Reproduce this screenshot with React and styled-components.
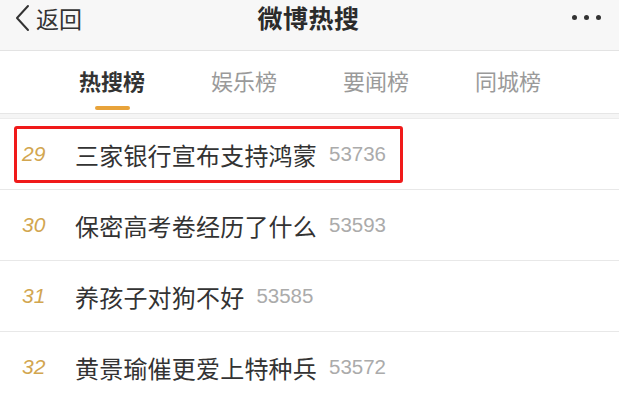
import styled, { createGlobalStyle } from "styled-components";

const GlobalStyle = createGlobalStyle`
  html, body {
    margin: 0;
    padding: 0;
    background: #ffffff;
  }
  body {
    font-family: "Noto Sans CJK SC", "Noto Sans", sans-serif;
    color: #333333;
  }
`;

const Page = styled.div`
  width: 619px;
  height: 398px;
  overflow: hidden;
  background: #ffffff;
`;

const Header = styled.header`
  display: grid;
  grid-template-columns: 1fr auto 1fr;
  align-items: center;
  height: 50px;
  padding: 0 16px 0 14px;
  background: #f7f7f7;
  border-bottom: 1px solid #e3e3e3;
`;

const Back = styled.div`
  display: flex;
  align-items: center;
  gap: 6px;
  font-size: 23px;
  color: #333333;
  margin-top: -14px;
`;

const Title = styled.h1`
  margin: -16px 0 0;
  font-size: 25px;
  font-weight: 700;
  letter-spacing: 0.5px;
  color: #2b2b2b;
`;

const More = styled.div`
  justify-self: end;
  display: flex;
  gap: 7px;
  margin-top: -16px;
  margin-right: 2px;
`;

const Dot = styled.span`
  width: 5px;
  height: 5px;
  border-radius: 50%;
  background: #333333;
`;

const Tabs = styled.nav`
  display: grid;
  grid-template-columns: repeat(4, 132px);
  height: 62px;
  padding-left: 46px;
  background: #ffffff;
  border-bottom: 1px solid #e6e6e6;
`;

const Tab = styled.div`
  display: flex;
  flex-direction: column;
  align-items: center;
  padding-top: 14px;
  font-size: 22px;
  line-height: 30px;
  font-weight: ${(p) => (p.$active ? 700 : 400)};
  color: ${(p) => (p.$active ? "#333333" : "#9a9a9a")};
`;

const Underline = styled.span`
  width: 35px;
  height: 4px;
  margin-top: 11px;
  border-radius: 2px;
  background: ${(p) => (p.$active ? "#e8a33a" : "transparent")};
`;

const Gap = styled.div`
  height: 4px;
  background: #f5f5f5;
  border-bottom: 1px solid #ececec;
`;

const List = styled.ul`
  margin: 0;
  padding: 0;
  list-style: none;
`;

const Row = styled.li`
  display: flex;
  align-items: center;
  height: 70px;
  border-bottom: 1px solid #e8e8e8;
  padding-left: 14px;
`;

const Entry = styled.div`
  display: flex;
  align-items: center;
  height: 51px;
  padding: 0 14px 0 5px;
  border: 3px solid ${(p) => (p.$marked ? "#f01a1a" : "transparent")};
  border-radius: 3px;
`;

const Rank = styled.span`
  width: 53px;
  font-family: "Liberation Sans", Arial, sans-serif;
  font-style: italic;
  font-size: 21px;
  color: #d2a650;
`;

const Topic = styled.span`
  font-size: 24px;
  color: #333333;
  letter-spacing: 0.2px;
`;

const Count = styled.span`
  margin-left: 12px;
  font-family: "Liberation Sans", Arial, sans-serif;
  font-size: 20.5px;
  color: #ababab;
`;

const tabs = ["热搜榜", "娱乐榜", "要闻榜", "同城榜"];

const items = [
  { rank: 29, title: "三家银行宣布支持鸿蒙", count: 53736, marked: true },
  { rank: 30, title: "保密高考卷经历了什么", count: 53593 },
  { rank: 31, title: "养孩子对狗不好", count: 53585 },
  { rank: 32, title: "黄景瑜催更爱上特种兵", count: 53572 },
];

const Chevron = () => (
  <svg width="16" height="28" viewBox="0 0 16 28">
    <polyline
      points="14,2 3,14 14,26"
      fill="none"
      stroke="#333333"
      strokeWidth="2"
      strokeLinecap="round"
      strokeLinejoin="round"
    />
  </svg>
);

const App = () => {
  return (
    <Page>
      <GlobalStyle />
      <Header>
        <Back>
          <Chevron />
          返回
        </Back>
        <Title>微博热搜</Title>
        <More>
          <Dot />
          <Dot />
          <Dot />
        </More>
      </Header>
      <Tabs>
        {tabs.map((t, i) => (
          <Tab key={t} $active={i === 0}>
            {t}
            <Underline $active={i === 0} />
          </Tab>
        ))}
      </Tabs>
      <Gap />
      <List>
        {items.map((it) => (
          <Row key={it.rank}>
            <Entry $marked={it.marked}>
              <Rank>{it.rank}</Rank>
              <Topic>{it.title}</Topic>
              <Count>{it.count}</Count>
            </Entry>
          </Row>
        ))}
      </List>
    </Page>
  );
};

export default App;
